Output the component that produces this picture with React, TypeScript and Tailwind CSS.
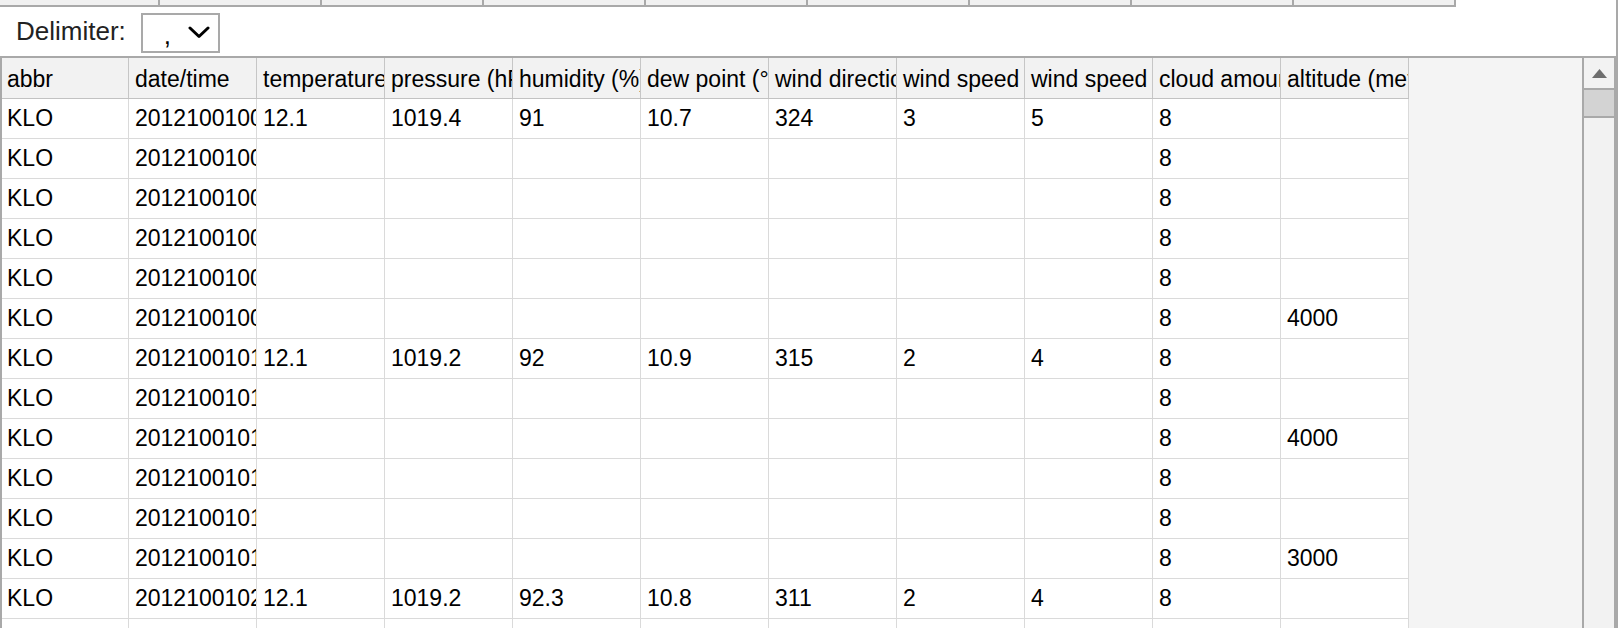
const columns = [
  "abbr",
  "date/time",
  "temperature (°C)",
  "pressure (hPa)",
  "humidity (%)",
  "dew point (°C)",
  "wind direction (°)",
  "wind speed (m/s)",
  "wind speed max (m/s)",
  "cloud amount (okta)",
  "altitude (meters)",
];

const rows: string[][] = [
  ["KLO", "201210010000", "12.1", "1019.4", "91", "10.7", "324", "3", "5", "8", ""],
  ["KLO", "201210010000", "", "", "", "", "", "", "", "8", ""],
  ["KLO", "201210010000", "", "", "", "", "", "", "", "8", ""],
  ["KLO", "201210010000", "", "", "", "", "", "", "", "8", ""],
  ["KLO", "201210010000", "", "", "", "", "", "", "", "8", ""],
  ["KLO", "201210010000", "", "", "", "", "", "", "", "8", "4000"],
  ["KLO", "201210010100", "12.1", "1019.2", "92", "10.9", "315", "2", "4", "8", ""],
  ["KLO", "201210010100", "", "", "", "", "", "", "", "8", ""],
  ["KLO", "201210010100", "", "", "", "", "", "", "", "8", "4000"],
  ["KLO", "201210010100", "", "", "", "", "", "", "", "8", ""],
  ["KLO", "201210010100", "", "", "", "", "", "", "", "8", ""],
  ["KLO", "201210010100", "", "", "", "", "", "", "", "8", "3000"],
  ["KLO", "201210010200", "12.1", "1019.2", "92.3", "10.8", "311", "2", "4", "8", ""],
  ["KLO", "201210010200", "", "", "", "", "", "", "", "8", ""],
];

const tabs = [160, 162, 162, 162, 162, 162, 162, 162, 162];

export default function App() {
  return (
    <div className="w-[1618px] h-[628px] overflow-hidden bg-white border-r-2 border-[#a9a9a9] flex flex-col font-['Liberation_Sans',Arial,sans-serif] text-black">
      {/* Tab strip remnant */}
      <div className="flex h-[7px] w-[1456px] shrink-0 bg-[#f1f1f1] border-b-2 border-[#a9a9a9]">
        {tabs.map((w, i) => (
          <div
            key={i}
            style={{ width: w }}
            className="h-full shrink-0 border-r-2 border-[#a9a9a9]"
          />
        ))}
      </div>

      {/* Delimiter row */}
      <div className="h-[49px] shrink-0 flex items-center pl-[16px] gap-[15px]">
        <span className="text-[26px] leading-none text-[#222] -mt-[2px]">Delimiter:</span>
        <div className="w-[79px] h-[40px] mt-[2px] border-2 border-[#a9a9a9] flex items-center pl-[21px] pr-[8px]">
          <span className="text-[26px] leading-none mt-[4px]">,</span>
          <svg width="22" height="13" viewBox="0 0 22 13" className="ml-auto">
            <polyline
              points="2,2 11,10.5 20,2"
              fill="none"
              stroke="#000"
              strokeWidth="3"
              strokeLinecap="round"
              strokeLinejoin="round"
            />
          </svg>
        </div>
      </div>

      {/* Table */}
      <div className="flex-1 min-h-0 flex border-t-2 border-l-2 border-[#a9a9a9]">
        <div className="flex-1 min-w-0 bg-[#f4f4f4] overflow-hidden text-[23px]">
          <div className="flex h-[41px] w-fit bg-[#f2f2f2] border-b border-[#c2c2c2]">
            {columns.map((c, i) => (
              <div
                key={c}
                className={`${i === 0 ? "w-[127px] pl-[5px]" : "w-[128px] pl-[6px]"} shrink-0 h-full border-r border-[#c6c6c6] overflow-hidden whitespace-nowrap flex items-center pt-[3px]`}
              >
                {c}
              </div>
            ))}
          </div>
          {rows.map((r, ri) => (
            <div key={ri} className="flex h-[40px] w-fit bg-white border-b border-[#dadada]">
              {r.map((v, ci) => (
                <div
                  key={ci}
                  className={`${ci === 0 ? "w-[127px] pl-[5px]" : "w-[128px] pl-[6px]"} shrink-0 h-full border-r border-[#dadada] overflow-hidden whitespace-nowrap flex items-center`}
                >
                  {v}
                </div>
              ))}
            </div>
          ))}
        </div>

        {/* Vertical scrollbar */}
        <div className="w-[34px] shrink-0 flex flex-col bg-[#f2f2f2] border-l-2 border-r-2 border-[#a9a9a9]">
          <div className="h-[32px] shrink-0 flex items-center justify-center border-b-2 border-[#a9a9a9]">
            <svg width="15" height="9" viewBox="0 0 15 9">
              <polygon points="7.5,0 15,9 0,9" fill="#6e6e6e" />
            </svg>
          </div>
          <div className="h-[28px] shrink-0 bg-[#d3d3d3] border-b-2 border-[#a9a9a9]" />
          <div className="flex-1" />
        </div>
      </div>
    </div>
  );
}
